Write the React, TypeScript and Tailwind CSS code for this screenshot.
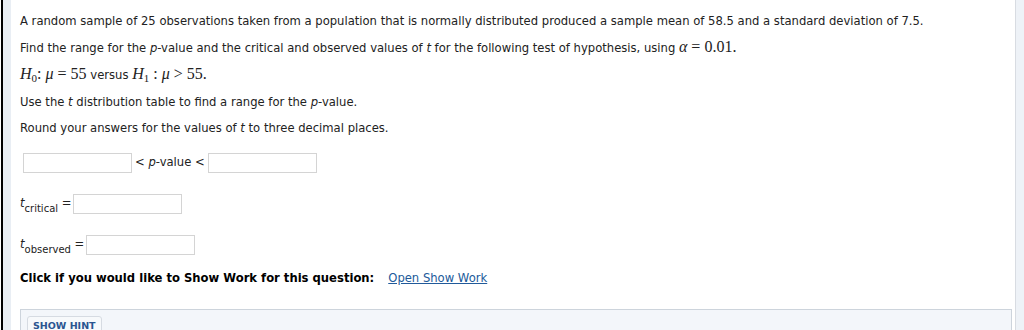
import React from "react";

const Math = ({ children }: { children: React.ReactNode }) => (
  <span className="font-['Liberation_Serif',serif] text-[16px] leading-[22px]">{children}</span>
);

const Box = ({ className = "" }: { className?: string }) => (
  <span className={"inline-block h-[20px] w-[109px] border border-[#d4d4d4] bg-white align-middle " + className} />
);

export default function App() {
  return (
    <div className="flex h-[330px] w-[1024px] overflow-hidden bg-white font-['DejaVu_Sans',sans-serif] text-[11.6px] text-[#222]">
      <div className="ml-[1px] w-[2px] bg-black" />
      <div className="w-[8px] bg-[#e9eef4]" />
      <div className="flex-1 pl-[9px] pr-[3px] pt-[10px]">
        <p className="leading-[22px]">
          A random sample of 25 observations taken from a population that is normally distributed produced a sample mean of 58.5 and a standard deviation of 7.5.
        </p>
        <p className="mt-[4px] h-[22px] leading-[22px]">
          Find the range for the <i>p</i>-value and the critical and observed values of <i>t</i> for the following test of hypothesis, using{" "}
          <Math>
            <i>α</i> = 0.01.
          </Math>
        </p>
        <p className="mt-[5px] h-[22px] leading-[22px]">
          <Math>
            <i>H</i>
            <sub className="text-[11px]">0</sub>: <i>μ</i> = 55
          </Math>{" "}
          versus{" "}
          <Math>
            <i>H</i>
            <sub className="text-[11px]">1</sub> : <i>μ</i> &gt; 55.
          </Math>
        </p>
        <p className="mt-[6px] leading-[22px]">
          Use the <i>t</i> distribution table to find a range for the <i>p</i>-value.
        </p>
        <p className="mt-[4px] leading-[22px]">
          Round your answers for the values of <i>t</i> to three decimal places.
        </p>
        <div className="mt-[14px] flex items-center pl-[3px]">
          <Box />
          <span className="mx-[3px]">
            &lt; <i>p</i>-value &lt;
          </span>
          <Box />
        </div>
        <div className="mt-[21px] flex items-center">
          <span>
            <i>t</i>
            <sub className="bottom-[-0.5em] text-[10px]">critical</sub> =
          </span>
          <Box className="ml-[2px]" />
        </div>
        <div className="mt-[21px] flex items-center">
          <span>
            <i>t</i>
            <sub className="bottom-[-0.5em] text-[10px]">observed</sub> =
          </span>
          <Box className="ml-[2px]" />
        </div>
        <div className="mt-[12px] flex items-center leading-[22px]">
          <span className="font-bold text-black">Click if you would like to Show Work for this question:</span>
          <a className="ml-[14px] text-[#215a9a] underline">Open Show Work</a>
        </div>
        <div className="mt-[20px] h-[40px] border border-[#cdd4dc] bg-[#f3f6fa] px-[6px] pt-[6px]">
          <span className="inline-block rounded-[3px] border border-[#d6dbe2] bg-[#f7f9fb] px-[5px] pt-[3px] pb-[2px] text-[9.5px] font-bold leading-[11px] text-[#2b5590]">
            SHOW HINT
          </span>
        </div>
      </div>
      <div className="w-[1px] bg-[#d8dce2]" />
      <div className="w-[8px] bg-[#eef2f7]" />
    </div>
  );
}
